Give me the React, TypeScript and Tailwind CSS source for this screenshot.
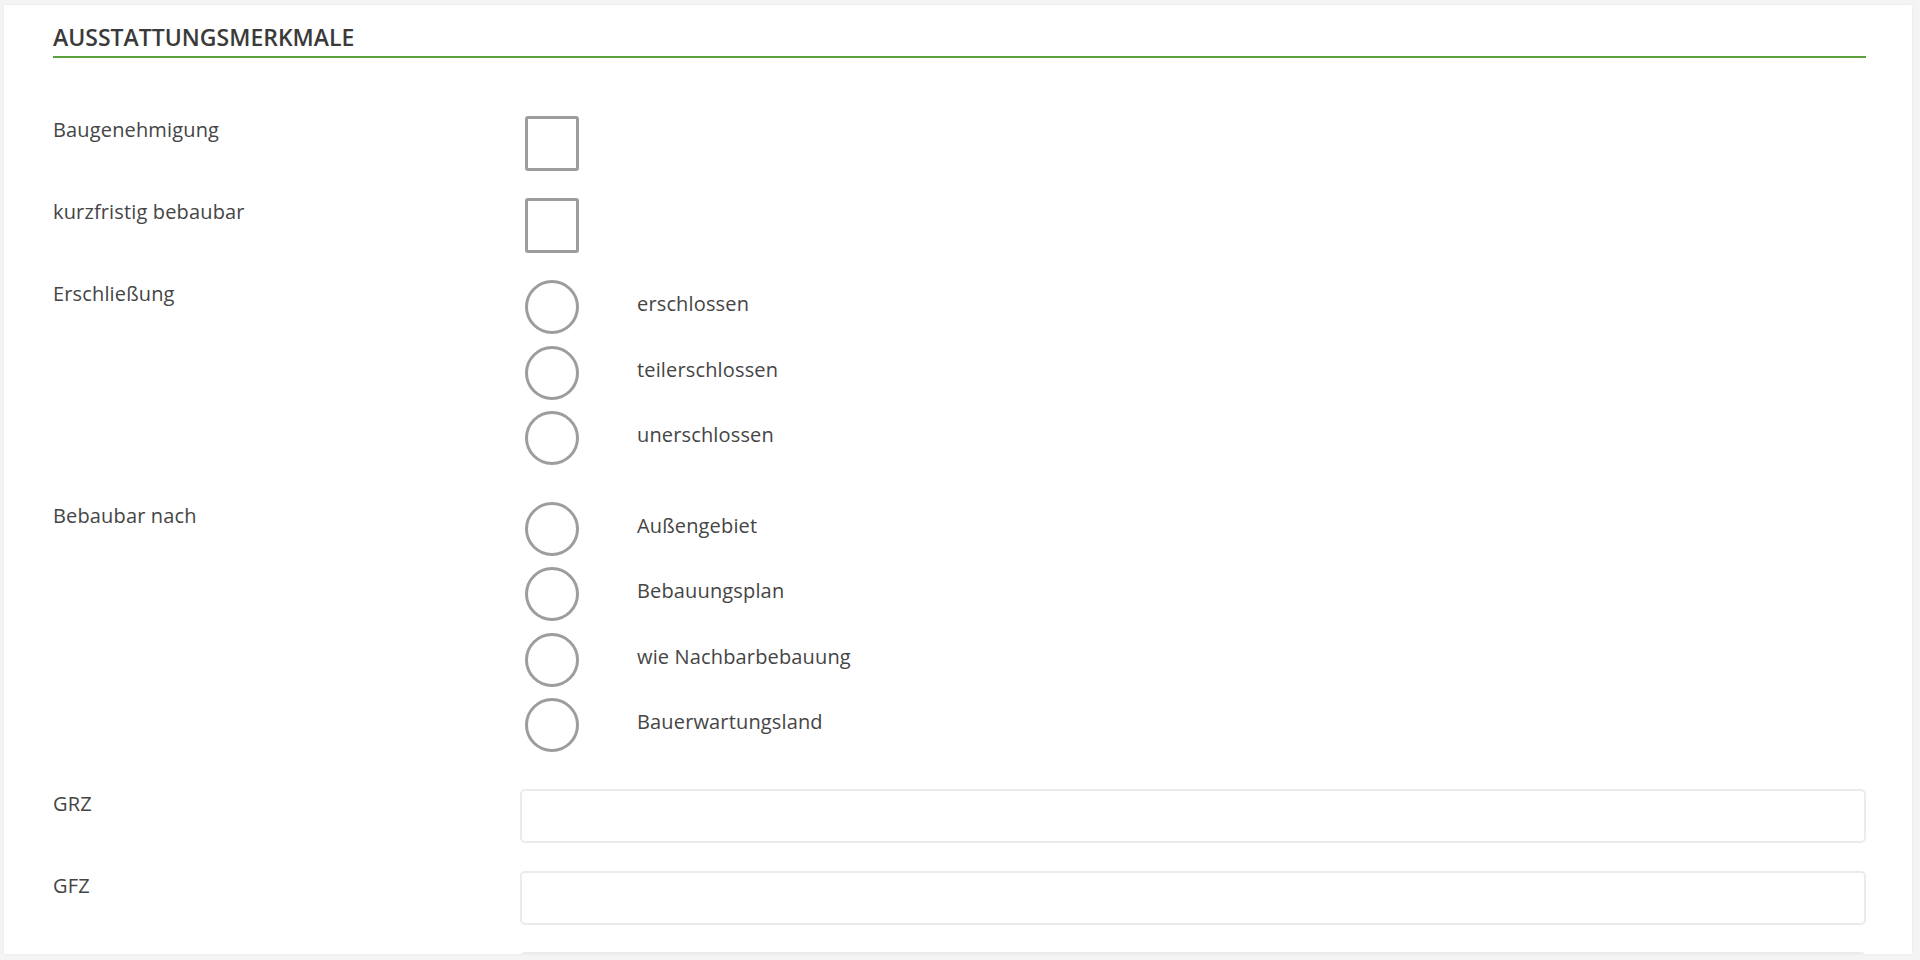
import React from 'react'

const font = { fontFamily: '"Open Sans", "Noto Sans", sans-serif' }

const erschliessung = ['erschlossen', 'teilerschlossen', 'unerschlossen']
const bebaubarNach = ['Außengebiet', 'Bebauungsplan', 'wie Nachbarbebauung', 'Bauerwartungsland']

function Label({ children }: { children?: React.ReactNode }) {
  return (
    <div className="w-[467px] shrink-0 text-[20px] leading-[28px] tracking-[0.15px] text-[#454545]">{children}</div>
  )
}

function Checkbox() {
  return <div className="ml-[5px] h-[55px] w-[54px] rounded-[3px] border-[3px] border-[#9d9d9d] bg-white" />
}

function RadioGroup({ options }: { options: string[] }) {
  return (
    <div className="flex flex-col">
      {options.map((opt) => (
        <label key={opt} className="mb-[11.5px] flex items-start">
          <span className="ml-[5px] block h-[54px] w-[54px] shrink-0 rounded-full border-[3px] border-[#9d9d9d] bg-white" />
          <span className="ml-[58px] mt-[10px] text-[20px] leading-[28px] tracking-[0.15px] text-[#454545]">{opt}</span>
        </label>
      ))}
    </div>
  )
}

function TextInput() {
  return <div className="h-[54px] w-full rounded-[5px] border-2 border-[#ebebeb] bg-white" />
}

export default function App() {
  return (
    <div className="h-[960px] w-full bg-[#f4f4f4] pl-[4px] pr-[8px] pt-[5px]" style={font}>
      <div className="h-[949px] overflow-hidden bg-white pl-[49px] pr-[46px] pt-[16px] shadow-[0_0_3px_rgba(0,0,0,0.06)]">
        <h2 className="border-b-2 border-[#5aa03c] pb-[2px] text-[23px] font-semibold leading-[33px] text-[#3a3a3a]">
          AUSSTATTUNGSMERKMALE
        </h2>

        <div className="mt-[58px] flex flex-col">
          <div className="mb-[27px] flex">
            <Label>Baugenehmigung</Label>
            <Checkbox />
          </div>
          <div className="mb-[27px] flex">
            <Label>kurzfristig bebaubar</Label>
            <Checkbox />
          </div>
          <div className="mb-[25px] flex">
            <Label>Erschließung</Label>
            <RadioGroup options={erschliessung} />
          </div>
          <div className="mb-[25px] flex">
            <Label>Bebaubar nach</Label>
            <RadioGroup options={bebaubarNach} />
          </div>
          <div className="mb-[28px] flex">
            <div className="pt-[1px]">
              <Label>GRZ</Label>
            </div>
            <TextInput />
          </div>
          <div className="mb-[27px] flex">
            <div className="pt-[1px]">
              <Label>GFZ</Label>
            </div>
            <TextInput />
          </div>
          <div className="mb-[27px] flex">
            <Label />
            <TextInput />
          </div>
        </div>
      </div>
    </div>
  )
}
